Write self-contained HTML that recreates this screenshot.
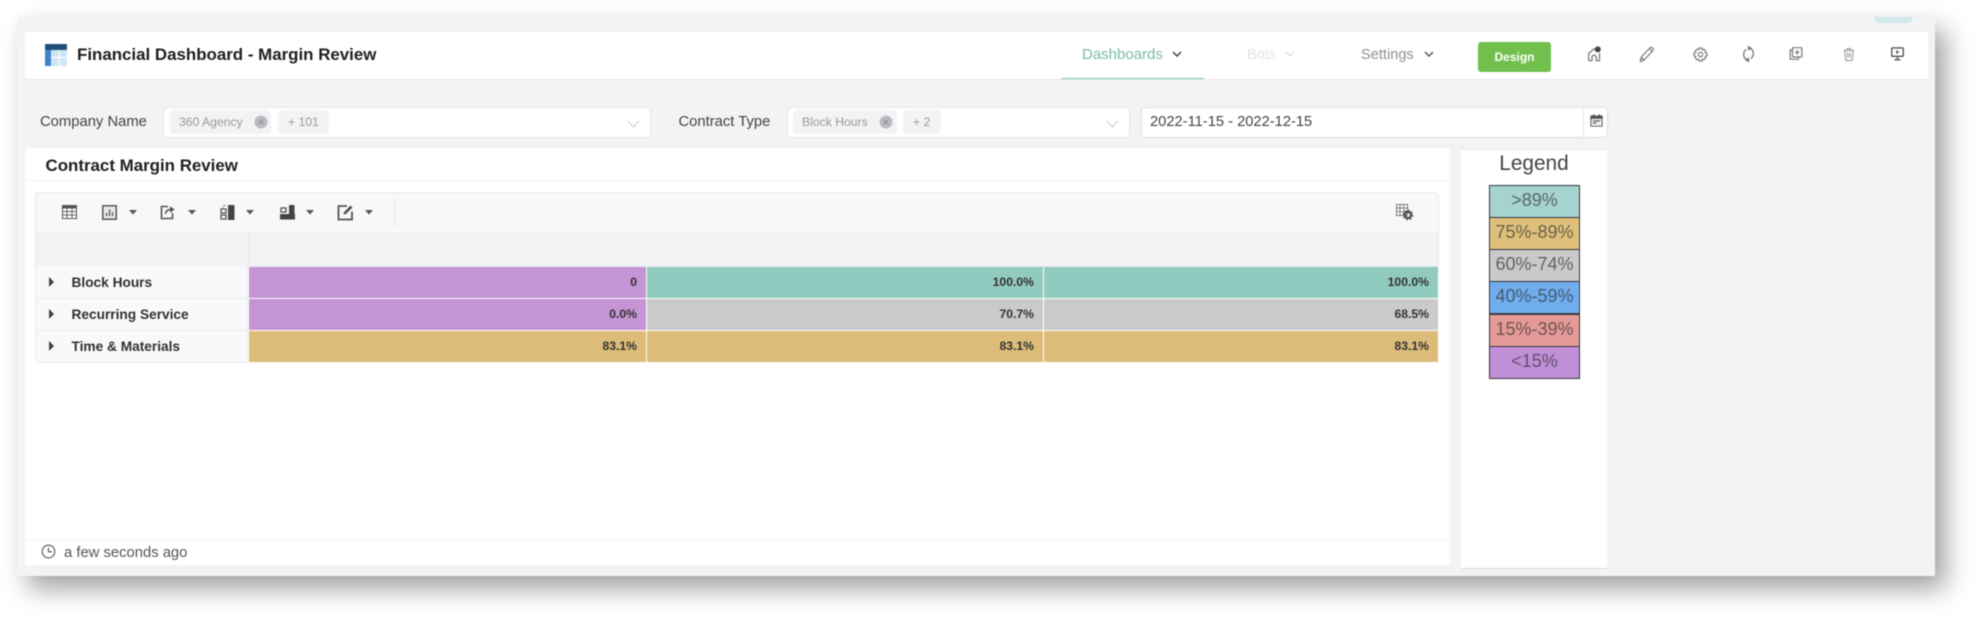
<!DOCTYPE html>
<html lang="en">
<head>
<meta charset="utf-8">
<title>Financial Dashboard - Margin Review</title>
<style>
html,body{margin:0;padding:0;width:1983px;height:624px;overflow:hidden;background:#fff;}
body{font-family:"Liberation Sans",sans-serif;position:relative;}
#w{position:absolute;left:0;top:0;width:1983px;height:624px;filter:blur(.4px);}
.a{position:absolute;box-sizing:border-box;}
.t{position:absolute;white-space:nowrap;line-height:1;}
.chip{position:absolute;background:#f2f3f5;border-radius:4px;top:110px;height:24px;}
.sel{position:absolute;top:107px;height:31px;background:#fff;border:1px solid #e4e6e9;border-radius:4px;box-sizing:border-box;}
.cell{position:absolute;box-sizing:border-box;text-align:right;padding-right:9px;font-weight:bold;font-size:12.2px;color:#333;line-height:31px;height:31px;}
.lab{position:absolute;left:71.5px;font-weight:bold;font-size:13.7px;color:#303133;line-height:31px;white-space:nowrap;}
.leg{position:absolute;left:1489px;width:91px;text-align:center;font-size:18px;color:rgba(50,50,50,.68);box-sizing:border-box;border:1.5px solid #37373f;line-height:29px;}
svg{position:absolute;overflow:visible;}
</style>
</head>
<body>
<div id="w">
<!-- main panel -->
<div class="a" style="left:17px;top:17px;width:1918px;height:559px;background:#f2f3f5;box-shadow:11px 13px 24px rgba(0,0,0,.36),0 0 12px rgba(0,0,0,.04);"></div>
<div class="a" style="left:1874px;top:17px;width:39px;height:6px;background:#d2eaec;border-radius:0 0 6px 6px;"></div>

<!-- top bar -->
<div class="a" style="left:25px;top:32px;width:1903px;height:47.5px;background:#fff;border-bottom:1px solid #e6e7e9;"></div>
<svg style="left:45px;top:44px" width="22" height="22" viewBox="0 0 22 22">
<rect x="0" y="5" width="22" height="17" fill="#cfe4f5"/>
<rect x="0" y="0" width="22" height="6" rx="1" fill="#1f4e79"/>
<rect x="0" y="6" width="6" height="16" fill="#3d85c6"/>
<path d="M6 13.5H22M14 6V22" stroke="#fff" stroke-width="1.2"/>
</svg>
<div class="t" style="left:77px;top:47px;font-size:16.9px;font-weight:bold;color:#1d1f22;">Financial Dashboard - Margin Review</div>

<div class="t" style="left:1082px;top:47px;font-size:15px;color:#7db9a9;">Dashboards</div>
<svg style="left:1172px;top:51px" width="10" height="7" viewBox="0 0 10 7"><path d="M1 1L5 5L9 1" fill="none" stroke="#444" stroke-width="1.5"/></svg>
<div class="a" style="left:1061px;top:77.5px;width:143px;height:1.5px;background:#7fc4b6;"></div>
<div class="t" style="left:1247px;top:48px;font-size:14.6px;color:#e2e4e6;">Bots</div>
<svg style="left:1285px;top:51px" width="10" height="7" viewBox="0 0 10 7"><path d="M1 1L5 5L9 1" fill="none" stroke="#dcdee0" stroke-width="1.3"/></svg>
<div class="t" style="left:1361px;top:48px;font-size:14.6px;color:#8d9094;">Settings</div>
<svg style="left:1424px;top:51px" width="10" height="7" viewBox="0 0 10 7"><path d="M1 1L5 5L9 1" fill="none" stroke="#555" stroke-width="1.5"/></svg>
<div class="a" style="left:1478px;top:42px;width:73px;height:30px;background:#71bf4d;border-radius:3px;color:#fff;font-size:12px;font-weight:bold;text-align:center;line-height:31px;">Design</div>

<!-- action icons -->
<svg style="left:1587px;top:45px" width="15" height="18" viewBox="0 0 18 20" fill="none" stroke="#777" stroke-width="1.5">
<path d="M2 18V9.5L8 4L12 6.5M15 9V18H11V13.5Q11 11.5 8.5 11.5Q6 11.5 6 13.5V18H2"/><circle cx="13" cy="4.5" r="3.6" fill="#444" stroke="none"/></svg>
<svg style="left:1639px;top:46px" width="16" height="17" viewBox="0 0 18 19" fill="none" stroke="#777" stroke-width="1.3">
<path d="M1.5 17.5L2.5 12.5L12.5 1.8Q14 1 15.5 2.3Q16.6 3.8 15.6 5.2L5.6 15.9ZM2.5 12.5L5.6 15.9M11.5 3L14.6 6.2"/></svg>
<svg style="left:1692.5px;top:46.5px" width="15" height="15" viewBox="0 0 18 18" fill="none" stroke="#777" stroke-width="1.4">
<path d="M7.4 1.2H10.6L11.1 3.4L13 2.6L15.3 4.9L14.5 6.8L16.8 7.4V10.6L14.6 11.2L15.4 13.1L13.1 15.4L11.2 14.6L10.6 16.8H7.4L6.8 14.6L4.9 15.4L2.6 13.1L3.4 11.2L1.2 10.6V7.4L3.4 6.8L2.6 4.9L4.9 2.6L6.8 3.4Z"/><circle cx="9" cy="9" r="2.6"/></svg>
<svg style="left:1741.5px;top:46px" width="13" height="16" viewBox="0 0 16 20" fill="none" stroke="#777" stroke-width="1.6">
<path d="M9 2.6Q14 3.6 14 9.5Q14 13.5 11 15.6"/><path d="M7 17.4Q2 16.4 2 10.5Q2 6.5 5 4.4"/><path d="M8 .8L11 2.8L8 4.4Z" fill="#555"/><path d="M8 15.6L5 17.4L8 19.2Z" fill="#555"/></svg>
<svg style="left:1789px;top:46px" width="14" height="15" viewBox="0 0 18 18" fill="none" stroke="#777" stroke-width="1.5">
<path d="M4.5 4.5H1.5V16.5H12V13.5"/><rect x="4.5" y="1.5" width="12" height="12" rx="1"/><path d="M10.5 4.5V10.5M7.5 7.5H13.5"/></svg>
<svg style="left:1843px;top:47px" width="12" height="15" viewBox="0 0 16 18" fill="none" stroke="#999" stroke-width="1.5">
<path d="M1 3.5H15M5.5 3.5V1.2H10.5V3.5M2.5 3.5L3.5 15.5Q3.7 17 5 17H11Q12.3 17 12.5 15.5L13.5 3.5M6.5 6.5V13.5M9.5 6.5V13.5"/></svg>
<svg style="left:1890.5px;top:47px" width="13" height="14" viewBox="0 0 17 18" fill="none" stroke="#555" stroke-width="1.8">
<rect x="1" y="1" width="15" height="11" rx="1"/><path d="M8.5 12V16M4.5 16.5H12.5"/><path d="M6.8 3.8L11 6.5L6.8 9Z" fill="#555" stroke="none"/></svg>

<!-- filter row -->
<div class="t" style="left:40px;top:115px;font-size:14.8px;color:#444;">Company Name</div>
<div class="sel" style="left:163px;width:488px;"></div>
<div class="chip" style="left:170px;width:101px;"></div>
<div class="t" style="left:179px;top:116px;font-size:12.2px;color:#999;">360 Agency</div>
<svg style="left:254px;top:115px" width="14" height="14" viewBox="0 0 14 14"><circle cx="7" cy="7" r="6.5" fill="#b9bbc0"/><path d="M4.5 4.5L9.5 9.5M9.5 4.5L4.5 9.5" stroke="#8f9196" stroke-width="1"/></svg>
<div class="chip" style="left:278px;width:51px;"></div>
<div class="t" style="left:288px;top:116px;font-size:12.2px;color:#999;">+ 101</div>
<svg style="left:627px;top:120px" width="13" height="8" viewBox="0 0 13 8"><path d="M1 1L6.5 7L12 1" fill="none" stroke="#c8cbd0" stroke-width="1"/></svg>

<div class="t" style="left:678.5px;top:115px;font-size:14.8px;color:#444;">Contract Type</div>
<div class="sel" style="left:787px;width:343px;"></div>
<div class="chip" style="left:793px;width:104px;"></div>
<div class="t" style="left:802px;top:116px;font-size:12.2px;color:#999;">Block Hours</div>
<svg style="left:879px;top:115px" width="14" height="14" viewBox="0 0 14 14"><circle cx="7" cy="7" r="6.5" fill="#b9bbc0"/><path d="M4.5 4.5L9.5 9.5M9.5 4.5L4.5 9.5" stroke="#8f9196" stroke-width="1"/></svg>
<div class="chip" style="left:902.5px;width:38px;"></div>
<div class="t" style="left:913px;top:116px;font-size:12.2px;color:#999;">+ 2</div>
<svg style="left:1106px;top:120px" width="13" height="8" viewBox="0 0 13 8"><path d="M1 1L6.5 7L12 1" fill="none" stroke="#c8cbd0" stroke-width="1"/></svg>

<div class="sel" style="left:1141px;width:467px;border-color:#dcdfe3;"></div>
<div class="t" style="left:1150px;top:115px;font-size:14.7px;color:#444;">2022-11-15 - 2022-12-15</div>
<div class="a" style="left:1583px;top:108px;width:1px;height:29px;background:#e8e9eb;"></div>
<svg style="left:1589.5px;top:113px" width="13" height="15" viewBox="0 0 16 16">
<path d="M1 2.5H15V15H1Z" fill="#f0f0f0" stroke="#555" stroke-width="1.2"/><rect x="1" y="2.5" width="14" height="3.5" fill="#555"/><rect x="3.5" y=".5" width="2" height="3.5" fill="#555"/><rect x="10.5" y=".5" width="2" height="3.5" fill="#555"/><path d="M3.5 8.5H12.5M3.5 11H8" stroke="#555" stroke-width="1.4"/></svg>

<!-- content card -->
<div class="a" style="left:25px;top:148px;width:1425px;height:391px;background:#fff;border-radius:3px 3px 0 0;"></div>
<div class="a" style="left:25px;top:180px;width:1425px;height:1px;background:#eceef0;"></div>
<div class="t" style="left:45.5px;top:158px;font-size:16.9px;font-weight:bold;color:#1d1f22;">Contract Margin Review</div>

<!-- toolbar -->
<div class="a" style="left:35px;top:192px;width:1403.5px;height:41.5px;background:#f7f8fa;border:1px solid #e8e9eb;border-radius:4px 4px 0 0;"></div>
<svg style="left:62px;top:205px" width="15" height="14" viewBox="0 0 15 14"><rect x=".5" y=".5" width="14" height="13" fill="#fff" stroke="#555"/><rect x=".5" y=".5" width="14" height="3" fill="#555"/><path d="M0 6.5H15M0 10H15M5 3V14M10 3V14" stroke="#666" stroke-width="1"/></svg>
<svg style="left:102px;top:205px" width="15" height="15" viewBox="0 0 15 15"><rect x=".8" y=".8" width="13.4" height="13.4" fill="#e8e9ec" stroke="#555" stroke-width="1.5"/><path d="M4.5 11V8M7.5 11V4.5M10.5 11V7" stroke="#555" stroke-width="1.3"/></svg>
<svg style="left:129px;top:210px" width="8" height="5" viewBox="0 0 8 5"><path d="M0 0H8L4 4.5Z" fill="#555"/></svg>
<svg style="left:160px;top:204px" width="16" height="16" viewBox="0 0 16 16" fill="none" stroke="#555" stroke-width="1.6"><path d="M8 2.5H1.5V14.5H12.5V9"/><path d="M5.5 10Q6 5.5 10.5 5.5" /><path d="M10 2.3L14.7 5.5L10 8.7Z" fill="#555" stroke="none"/></svg>
<svg style="left:188px;top:210px" width="8" height="5" viewBox="0 0 8 5"><path d="M0 0H8L4 4.5Z" fill="#555"/></svg>
<svg style="left:220px;top:204px" width="15" height="16" viewBox="0 0 15 16"><rect x="8" y="1" width="6.5" height="15" fill="#444"/><rect x="1" y="5" width="5" height="4" fill="none" stroke="#555" stroke-width="1.3"/><rect x="1" y="11" width="5" height="4" fill="none" stroke="#555" stroke-width="1.3"/><path d="M2.5 3L5.5 .8" stroke="#888" stroke-width="1"/></svg>
<svg style="left:246px;top:210px" width="8" height="5" viewBox="0 0 8 5"><path d="M0 0H8L4 4.5Z" fill="#555"/></svg>
<svg style="left:279px;top:204px" width="16" height="16" viewBox="0 0 16 16"><rect x="1" y="10" width="15" height="5.5" fill="#444"/><rect x="10" y="1" width="5.5" height="10" fill="#444"/><rect x="2" y="4" width="5" height="4" fill="none" stroke="#555" stroke-width="1.3"/></svg>
<svg style="left:306px;top:210px" width="8" height="5" viewBox="0 0 8 5"><path d="M0 0H8L4 4.5Z" fill="#555"/></svg>
<svg style="left:337px;top:203px" width="18" height="18" viewBox="0 0 18 18" fill="none" stroke="#555" stroke-width="1.8"><path d="M10 3H1.5V16.5H15V8.5"/><path d="M6.5 11.5L7 9L13.5 2.5L15.5 4.5L9 11Z" fill="#555" stroke="none"/></svg>
<svg style="left:365px;top:210px" width="8" height="5" viewBox="0 0 8 5"><path d="M0 0H8L4 4.5Z" fill="#555"/></svg>
<div class="a" style="left:394px;top:199px;width:1px;height:28px;background:#dfe1e4;"></div>
<svg style="left:1396px;top:204px" width="17" height="16" viewBox="0 0 17 16"><rect x=".5" y=".5" width="11" height="11" fill="#fff" stroke="#777"/><path d="M0 4H12M0 7.7H12M4 0V12M7.7 0V12" stroke="#777" stroke-width=".9"/><circle cx="12" cy="11" r="3" fill="none" stroke="#444" stroke-width="2"/><circle cx="12" cy="11" r="4.6" fill="none" stroke="#444" stroke-width="1.3" stroke-dasharray="1.8 1.8"/></svg>

<!-- table -->
<div class="a" style="left:35px;top:233.5px;width:1403.5px;height:33px;background:#f2f3f5;border:1px solid #e8e9eb;border-top:0;"></div>
<div class="a" style="left:248px;top:233.5px;width:1px;height:33px;background:#e4e6e9;"></div>
<div class="a" style="left:35px;top:266px;width:213px;height:97px;background:#f8f9fb;border:1px solid #e8e9eb;border-top:0;border-radius:0 0 0 3px;"></div>
<div class="a" style="left:36px;top:298px;width:212px;height:1px;background:#e6e8ea;"></div>
<div class="a" style="left:36px;top:330px;width:212px;height:1px;background:#e6e8ea;"></div>

<svg style="left:49px;top:277px" width="5" height="10" viewBox="0 0 5 10"><path d="M0 0L5 5L0 10Z" fill="#444"/></svg>
<svg style="left:49px;top:309px" width="5" height="10" viewBox="0 0 5 10"><path d="M0 0L5 5L0 10Z" fill="#444"/></svg>
<svg style="left:49px;top:341px" width="5" height="10" viewBox="0 0 5 10"><path d="M0 0L5 5L0 10Z" fill="#444"/></svg>
<div class="lab" style="top:267px;">Block Hours</div>
<div class="lab" style="top:299px;">Recurring Service</div>
<div class="lab" style="top:330.5px;">Time &amp; Materials</div>

<div class="cell" style="left:249px;top:267px;width:397px;background:#c594d4;">0</div>
<div class="cell" style="left:647px;top:267px;width:396px;background:#91cabf;">100.0%</div>
<div class="cell" style="left:1044px;top:267px;width:394px;background:#91cabf;">100.0%</div>
<div class="cell" style="left:249px;top:299px;width:397px;background:#c594d4;">0.0%</div>
<div class="cell" style="left:647px;top:299px;width:396px;background:#cacaca;">70.7%</div>
<div class="cell" style="left:1044px;top:299px;width:394px;background:#cacaca;">68.5%</div>
<div class="cell" style="left:249px;top:331px;width:397px;background:#dcbc78;">83.1%</div>
<div class="cell" style="left:647px;top:331px;width:396px;background:#dcbc78;">83.1%</div>
<div class="cell" style="left:1044px;top:331px;width:394px;background:#dcbc78;">83.1%</div>

<!-- footer -->
<div class="a" style="left:25px;top:540px;width:1425px;height:25px;background:#fff;"></div>
<svg style="left:41px;top:544px" width="15" height="15" viewBox="0 0 15 15" fill="none" stroke="#555" stroke-width="1.1"><circle cx="7.5" cy="7.5" r="6.3"/><path d="M7.5 3.5V7.8H11"/></svg>
<div class="t" style="left:64px;top:545.5px;font-size:14.8px;color:#555;">a few seconds ago</div>

<!-- legend -->
<div class="a" style="left:1461px;top:149px;width:146px;height:420px;background:#fff;border-top:1px solid #e6e7e9;border-bottom:1px solid #d8dadd;"></div>
<div class="t" style="left:1461px;width:146px;top:153.5px;text-align:center;font-size:20.8px;color:#444;">Legend</div>
<div class="leg" style="top:185px;height:33px;background:#a5d3cf;">&gt;89%</div>
<div class="leg" style="top:217px;height:33px;background:#dfc07a;">75%-89%</div>
<div class="leg" style="top:249px;height:33px;background:#c9c9c9;">60%-74%</div>
<div class="leg" style="top:281px;height:33px;background:#6fadee;">40%-59%</div>
<div class="leg" style="top:313.5px;height:33px;background:#e69a97;">15%-39%</div>
<div class="leg" style="top:345.5px;height:33px;background:#c08fd8;">&lt;15%</div>
</div>
</body>
</html>
